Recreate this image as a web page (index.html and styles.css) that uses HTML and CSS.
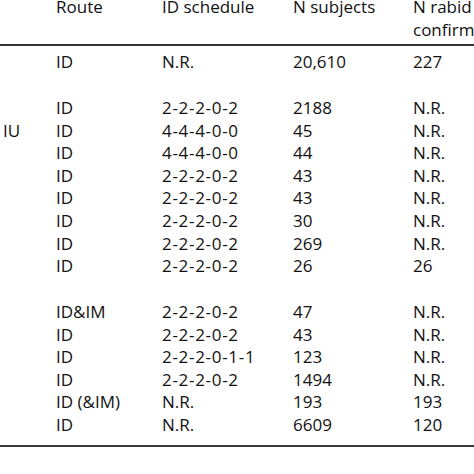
FILE: index.html
```html
<!DOCTYPE html>
<html>
<head>
<meta charset="utf-8">
<link rel="stylesheet" href="styles.css">
</head>
<body>
<div class="frame">
<table class="data">
  <colgroup>
    <col class="c1"><col class="c2"><col class="c3"><col class="c4"><col class="c5">
  </colgroup>
  <thead>
    <tr>
      <th></th>
      <th>Route</th>
      <th>ID schedule</th>
      <th>N subjects</th>
      <th>N rabid<span class="l2">confirmed</span></th>
    </tr>
  </thead>
  <tbody>
    <tr class="first"><td></td><td>ID</td><td>N.R.</td><td>20,610</td><td>227</td></tr>
    <tr class="gap"><td colspan="5"></td></tr>
    <tr><td></td><td>ID</td><td class="sch">2-2-2-0-2</td><td>2188</td><td>N.R.</td></tr>
    <tr><td class="grp">IU</td><td>ID</td><td class="sch">4-4-4-0-0</td><td>45</td><td>N.R.</td></tr>
    <tr><td></td><td>ID</td><td class="sch">4-4-4-0-0</td><td>44</td><td>N.R.</td></tr>
    <tr><td></td><td>ID</td><td class="sch">2-2-2-0-2</td><td>43</td><td>N.R.</td></tr>
    <tr><td></td><td>ID</td><td class="sch">2-2-2-0-2</td><td>43</td><td>N.R.</td></tr>
    <tr><td></td><td>ID</td><td class="sch">2-2-2-0-2</td><td>30</td><td>N.R.</td></tr>
    <tr><td></td><td>ID</td><td class="sch">2-2-2-0-2</td><td>269</td><td>N.R.</td></tr>
    <tr><td></td><td>ID</td><td class="sch">2-2-2-0-2</td><td>26</td><td>26</td></tr>
    <tr class="gap gap2"><td colspan="5"></td></tr>
    <tr><td></td><td>ID&amp;IM</td><td class="sch">2-2-2-0-2</td><td>47</td><td>N.R.</td></tr>
    <tr><td></td><td>ID</td><td class="sch">2-2-2-0-2</td><td>43</td><td>N.R.</td></tr>
    <tr><td></td><td>ID</td><td class="sch">2-2-2-0-1-1</td><td>123</td><td>N.R.</td></tr>
    <tr><td></td><td>ID</td><td class="sch">2-2-2-0-2</td><td>1494</td><td>N.R.</td></tr>
    <tr><td></td><td>ID (&amp;IM)</td><td>N.R.</td><td>193</td><td>193</td></tr>
    <tr class="last"><td></td><td>ID</td><td>N.R.</td><td>6609</td><td>120</td></tr>
  </tbody>
</table>
</div>
</body>
</html>
```

FILE: styles.css
```css
html, body {
  margin: 0;
  padding: 0;
  background: #ffffff;
}

.frame {
  width: 474px;
  height: 474px;
  overflow: hidden;
}

.data {
  width: 580px;
  border-collapse: collapse;
  table-layout: fixed;
  font-family: "Open Sans", "Noto Sans", sans-serif;
  font-size: 17px;
  line-height: 22.55px;
  color: #111111;
}

.c1 { width: 56px; }
.c2 { width: 106px; }
.c3 { width: 131px; }
.c4 { width: 120px; }
.c5 { width: 167px; }

.data th,
.data td {
  padding: 0;
  text-align: left;
  vertical-align: top;
  white-space: nowrap;
  font-weight: normal;
}

.data thead th {
  line-height: 13.4px;
  padding-bottom: 8.1px;
  border-bottom: 2px solid #363636;
}

.data thead .l2 {
  display: block;
  margin-top: 9.1px;
}

.data .grp {
  padding-left: 3px;
}

.data .sch {
  letter-spacing: 0.7px;
}

.data .first td {
  padding-top: 4.7px;
}

.data .gap td {
  height: 24px;
}

.data .gap2 td {
  height: 23.4px;
}

.data .last td {
  padding-bottom: 8.4px;
  border-bottom: 2px solid #3a3a3a;
}
```
